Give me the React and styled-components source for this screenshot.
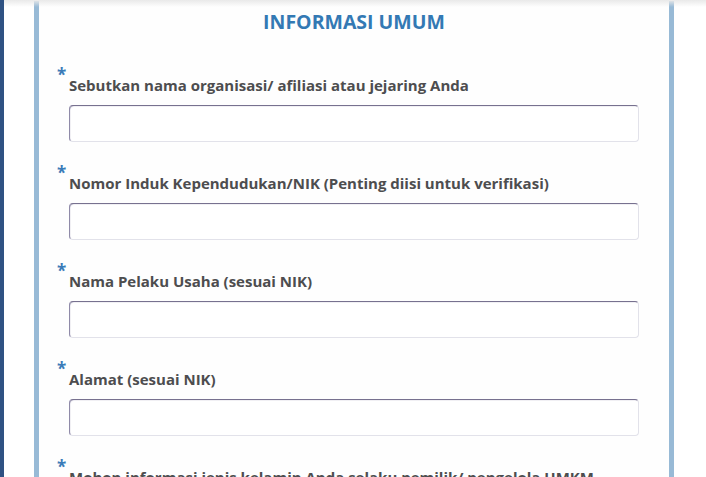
import React from 'react'
import styled, { createGlobalStyle } from 'styled-components'

const GlobalStyle = createGlobalStyle`
  html, body { margin: 0; padding: 0; background: #fff; }
  body { font-family: "Open Sans", "Liberation Sans", sans-serif; overflow: hidden; }
  * { box-sizing: border-box; }
`

const Page = styled.div`
  position: relative;
  display: flex;
  height: 477px;
  background: #fff;
  &::after{
    content: '';
    position: absolute;
    top: 0; left: 4px; right: 0;
    height: 7px;
    background: linear-gradient(#e9e9e9, rgba(255,255,255,0));
    pointer-events: none;
  }
`
const SideStrip = styled.div`
  width: 4px;
  background: #2f5283;
  flex-shrink: 0;
`
const Card = styled.div`
  margin-left: 30px;
  width: 640px;
  margin-top: 1px;
  background: #fefefe;
  border-left: 5px solid #98bad6;
  border-right: 5px solid #98bad6;
  padding: 8px 30px 0 18px;
`
const Title = styled.h2`
  margin: 0 0 33px 12px;
  text-align: center;
  font-size: 19.5px;
  line-height: 26px;
  font-weight: 700;
  color: #3379b4;
`
const Field = styled.div`
  margin-bottom: 24px;
`
const LabelRow = styled.div`
  display: flex;
  align-items: flex-start;
`
const Asterisk = styled.span`
  width: 12px;
  font-size: 17px;
  line-height: 14px;
  font-weight: 700;
  color: #3a7bb8;
`
const LabelText = styled.label`
  padding-top: 7px;
  font-size: 15px;
  line-height: 20px;
  font-weight: 700;
  color: #4d4d4f;
`
const Input = styled.input`
  display: block;
  margin: 10px 0 0 12px;
  width: 570px;
  height: 37px;
  border-radius: 4px;
  border: 1px solid #e2e2ea;
  border-top-color: #77718f;
  border-left-color: #8f8aa8;
  box-shadow: inset 1px 1px 1px -1px #6f6990;
  background: #fff;
  font: inherit;
  font-size: 14px;
  padding: 0 10px;
  &:focus{ outline: none; }
`

const fields = [
  'Sebutkan nama organisasi/ afiliasi atau jejaring Anda',
  'Nomor Induk Kependudukan/NIK (Penting diisi untuk verifikasi)',
  'Nama Pelaku Usaha (sesuai NIK)',
  'Alamat (sesuai NIK)',
  'Mohon informasi jenis kelamin Anda selaku pemilik/ pengelola UMKM',
]

function App() {
  return (
    <>
      <GlobalStyle />
      <Page>
        <SideStrip />
        <Card>
          <Title>INFORMASI UMUM</Title>
          {fields.map((f, i) => (
            <Field key={i}>
              <LabelRow>
                <Asterisk>*</Asterisk>
                <LabelText>{f}</LabelText>
              </LabelRow>
              <Input type='text' />
            </Field>
          ))}
        </Card>
      </Page>
    </>
  )
}

export default App
